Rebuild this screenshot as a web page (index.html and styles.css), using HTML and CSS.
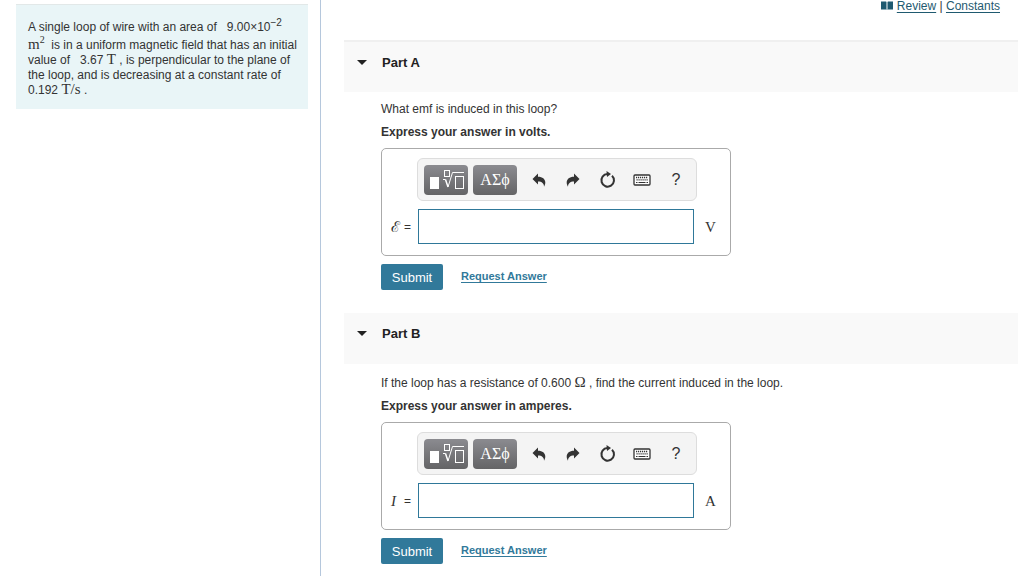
FILE: index.html
```html
<!DOCTYPE html>
<html lang="en">
<head>
  <meta charset="UTF-8">
  <meta name="viewport" content="width=device-width, initial-scale=1.0">
  <title>Induced emf in a loop</title>
  <link rel="stylesheet" href="styles.css">
</head>
<body>
  <!-- shared icons -->
  <svg class="icon-defs" aria-hidden="true">
    <symbol id="icon-template" viewBox="0 0 44 30">
      <rect x="6" y="12" width="9" height="12" fill="#fff"/>
      <g fill="none" stroke="#fff">
        <rect x="20.5" y="5.5" width="5" height="6"/>
        <path d="M19 14.500h2.500"/>
        <path d="M21.500 14.500l2.500 7.500" stroke-width="1.500"/>
        <path d="M24 22l4.500-14.500H40"/>
        <rect x="31.500" y="11.500" width="8" height="12"/>
      </g>
    </symbol>
    <symbol id="icon-undo" viewBox="0 0 16 16">
      <path d="M1.500 7L7 1.500v3.200c4.500 0 7.300 2.300 7.300 5.800 0 1.700-.6 3-1.300 4.200C13 11.500 11 9.500 7 9.500v3z"/>
    </symbol>
    <symbol id="icon-redo" viewBox="0 0 16 16">
      <path d="M14.500 7L9 1.500v3.200C4.500 4.700 1.700 7 1.700 10.500c0 1.700.6 3 1.300 4.200C3 11.500 5 9.500 9 9.500v3z"/>
    </symbol>
    <symbol id="icon-reset" viewBox="0 0 18 18">
      <path d="M13 4.700A6.300 6.300 0 1 1 8.500 3" fill="none" stroke="currentColor" stroke-width="2"/>
      <path d="M7.500 0L12 3 8 6z"/>
    </symbol>
    <symbol id="icon-keyboard" viewBox="0 0 18 12">
      <rect x="1" y="1" width="16" height="10" rx="1" fill="#fff" stroke="currentColor" stroke-width="1.300"/>
      <path d="M3 3.500h12M3.500 5.800h11.500" fill="none" stroke="currentColor" stroke-width="1.300" stroke-dasharray="1.200 .8"/>
      <path d="M3 8.500h1.500M5.500 8.500h7M13.500 8.500H15" fill="none" stroke="currentColor" stroke-width="1.200"/>
    </symbol>
  </svg>

  <div class="page">
    <aside class="sidebar">
      <p class="problem">A single loop of wire with an area of &nbsp; 9.00×10<sup>−2</sup><br>
        <span class="math">m<sup>2</sup></span>&nbsp; is in a uniform magnetic field that has an initial value of &nbsp; 3.67&nbsp;<span class="math">T</span> , is perpendicular to the plane of the loop, and is decreasing at a constant rate of 0.192&nbsp;<span class="math">T/s</span>&nbsp;.</p>
    </aside>

    <main class="content">
      <nav class="resources">
        <svg class="book" viewBox="0 0 12 9" aria-hidden="true"><path d="M0 .5h5l.5.500V9L5 8.500H0zM12 .5H7L6.500 1v8l.5-.500h5z"/></svg>
        <a href="#">Review</a> | <a href="#">Constants</a>
      </nav>

      <section class="part">
        <h2 class="part-title">Part A</h2>
        <div class="part-body">
          <p>What emf is induced in this loop?</p>
          <p class="instruction">Express your answer in volts.</p>
          <form>
            <div class="answer-box">
              <div class="toolbar">
                <button type="button" class="key" aria-label="Templates"><svg width="44" height="30"><use href="#icon-template"/></svg></button>
                <button type="button" class="key">ΑΣϕ</button>
                <button type="button" class="tool" aria-label="Undo"><svg width="16" height="16"><use href="#icon-undo"/></svg></button>
                <button type="button" class="tool" aria-label="Redo"><svg width="16" height="16"><use href="#icon-redo"/></svg></button>
                <button type="button" class="tool" aria-label="Reset"><svg width="18" height="18"><use href="#icon-reset"/></svg></button>
                <button type="button" class="tool" aria-label="Keyboard"><svg width="18" height="12"><use href="#icon-keyboard"/></svg></button>
                <button type="button" class="tool">?</button>
              </div>
              <label for="emf"><span class="symbol">ℰ</span> =</label>
              <input type="text" id="emf">
              <span class="unit">V</span>
            </div>
            <div class="actions">
              <button type="submit" class="submit">Submit</button>
              <a href="#">Request Answer</a>
            </div>
          </form>
        </div>
      </section>

      <section class="part">
        <h2 class="part-title">Part B</h2>
        <div class="part-body">
          <p>If the loop has a resistance of 0.600 <span class="math">Ω</span> , find the current induced in the loop.</p>
          <p class="instruction">Express your answer in amperes.</p>
          <form>
            <div class="answer-box">
              <div class="toolbar">
                <button type="button" class="key" aria-label="Templates"><svg width="44" height="30"><use href="#icon-template"/></svg></button>
                <button type="button" class="key">ΑΣϕ</button>
                <button type="button" class="tool" aria-label="Undo"><svg width="16" height="16"><use href="#icon-undo"/></svg></button>
                <button type="button" class="tool" aria-label="Redo"><svg width="16" height="16"><use href="#icon-redo"/></svg></button>
                <button type="button" class="tool" aria-label="Reset"><svg width="18" height="18"><use href="#icon-reset"/></svg></button>
                <button type="button" class="tool" aria-label="Keyboard"><svg width="18" height="12"><use href="#icon-keyboard"/></svg></button>
                <button type="button" class="tool">?</button>
              </div>
              <label for="current"><i class="symbol">I</i> =</label>
              <input type="text" id="current">
              <span class="unit">A</span>
            </div>
            <div class="actions">
              <button type="submit" class="submit">Submit</button>
              <a href="#">Request Answer</a>
            </div>
          </form>
        </div>
      </section>
    </main>
  </div>
</body>
</html>
```
FILE: styles.css
```css
* {
  box-sizing: border-box;
}

body {
  margin: 0;
  font-family: "Liberation Sans", Arial, sans-serif;
  font-size: 12px;
  line-height: 16px;
  color: #333;
  background-color: #fff;
}

p {
  margin: 0;
}

button {
  padding: 0;
  border: none;
  cursor: pointer;
}

.icon-defs {
  display: none;
}

.page {
  display: flex;
  min-height: 100vh;
}

/* Problem statement */
.sidebar {
  flex: none;
  width: 321px;
  padding: 4px 12px 0 16px;
  border-right: 1px solid #b5c7dc;
}

.problem {
  padding: 13px 4px 11px 12px;
  border-top: 1px solid #e2e8e8;
  line-height: 15px;
  background-color: #e9f5f7;
}

.math,
.symbol,
.unit {
  font-family: "Liberation Serif", "DejaVu Serif", serif;
  font-size: 15px;
  line-height: 18px;
}

.problem .math {
  line-height: 0;
}

sup {
  font-size: 10px;
  line-height: 1;
}

.content {
  flex: 1;
  padding: 0 6px 0 23px;
}

.resources {
  height: 40px;
  padding-right: 18px;
  line-height: 12px;
  text-align: right;
}

.resources a {
  color: #1f5a70;
  text-underline-offset: 2px;
}

.book {
  width: 12px;
  height: 9px;
  fill: #1f5a70;
}

/* Parts */
.part-title {
  display: flex;
  gap: 15px;
  height: 51px;
  margin: 0;
  padding: 13px 13px 0;
  font-size: 13px;
  color: #222;
  background-color: #f9f9f9;
}

.part-title::before {
  content: "";
  height: 0;
  margin-top: 5px;
  border: 5px solid transparent;
  border-top-color: #222;
  border-bottom: none;
}

.part:first-of-type .part-title {
  height: 52px;
  border-top: 2px solid #f0f0f0;
}

.part-body {
  padding: 9px 0 23px 37px;
}

.instruction {
  margin: 7px 0 8px;
  font-weight: bold;
}

.answer-box {
  display: inline-grid;
  grid-template-columns: 27px 280px auto;
  align-items: center;
  row-gap: 8px;
  padding: 9px 14px 11px 9px;
  border: 1px solid #aaa;
  border-radius: 5px;
  vertical-align: top;
}

.toolbar {
  display: flex;
  grid-column: 2;
  align-items: center;
  height: 43px;
  margin: 0 1px 0 -1px;
  padding: 0 3px 0 6px;
  border: 1px solid #ddd;
  border-radius: 6px;
  background-color: #f4f4f4;
}

.key {
  width: 44px;
  height: 30px;
  margin-right: 5px;
  border-radius: 4px;
  font-family: "Liberation Serif", "DejaVu Serif", serif;
  font-size: 16px;
  color: #fff;
  background: linear-gradient(#8b8b90, #646466);
}

.key svg {
  display: block;
}

.tool {
  display: flex;
  flex: 1;
  align-items: center;
  justify-content: center;
  height: 30px;
  font-family: inherit;
  font-size: 16px;
  color: #333;
  background: none;
  fill: currentColor;
}

.answer-box label {
  display: flex;
  grid-column: 1;
  align-items: center;
  justify-content: space-between;
  padding-right: 7px;
}

.answer-box input {
  width: 276px;
  height: 35px;
  padding: 0 8px;
  border: 1px solid #2f7899;
  font-size: 14px;
}

.unit {
  padding-left: 7px;
}

.actions {
  display: flex;
  align-items: center;
  gap: 18px;
  margin-top: 8px;
}

.submit {
  width: 62px;
  height: 26px;
  border-radius: 2px;
  font-family: inherit;
  font-size: 13px;
  color: #fff;
  background-color: #31799a;
}

.actions a {
  padding-bottom: 2px;
  font-size: 11px;
  font-weight: bold;
  color: #31799a;
  text-underline-offset: 2px;
}
```
